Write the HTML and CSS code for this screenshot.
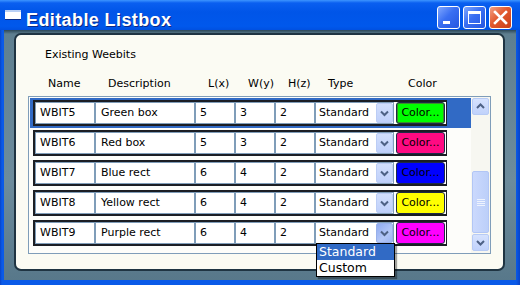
FILE: index.html
```html
<!DOCTYPE html>
<html lang="en">
<head>
  <meta charset="UTF-8" />
  <title>Editable Listbox</title>
  <link rel="stylesheet" href="styles.css">
</head>
<body>
<div class="window">
  <div class="titlebar">
    <svg class="app-icon" width="16" height="10" viewBox="0 0 16 10">
      <rect x="0" y="0" width="16" height="9" fill="#ffffff"/>
      <rect x="0" y="0" width="16" height="2" fill="#b9d0f5"/>
      <rect x="0" y="9" width="16" height="1" fill="#0b2f8c"/>
    </svg>
    <span class="title">Editable Listbox</span>
    <div class="caption-buttons">
      <div class="cap">
        <svg width="21" height="21" viewBox="0 0 21 21"><rect x="5" y="14" width="7" height="3" fill="#fff"/></svg>
      </div>
      <div class="cap">
        <svg width="21" height="21" viewBox="0 0 21 21"><path d="M4 4h13v13H4z M5 7v9h11V7z" fill="#fff" fill-rule="evenodd"/></svg>
      </div>
      <div class="cap close">
        <svg width="21" height="21" viewBox="0 0 21 21"><path d="M5 5L16 16M16 5L5 16" stroke="#fff" stroke-width="2.6" stroke-linecap="square"/></svg>
      </div>
    </div>
  </div>

  <div class="client">
    <div class="panel">
      <div class="caption">Existing Weebits</div>
      <div class="columns">
        <span>Name</span><span>Description</span><span>L(x)</span><span>W(y)</span><span>H(z)</span><span>Type</span><span class="col-color">Color</span>
      </div>

      <div class="listbox">
        <div class="items">
          <div class="item selected">
            <div class="row">
              <div class="cell c-name">WBIT5</div><div class="cell c-desc">Green box</div><div class="cell c-num">5</div><div class="cell c-num">3</div><div class="cell c-num">2</div>
              <div class="combo"><span class="combo-text">Standard</span><span class="combo-btn"><svg width="15" height="18" viewBox="0 0 15 18"><path d="M4 7.5l3.5 3.5 3.5-3.5" fill="none" stroke="#4d6185" stroke-width="2"/></svg></span></div>
              <div class="color-btn focused c-green">Color...</div>
            </div>
          </div>
          <div class="item">
            <div class="row">
              <div class="cell c-name">WBIT6</div><div class="cell c-desc">Red box</div><div class="cell c-num">5</div><div class="cell c-num">3</div><div class="cell c-num">2</div>
              <div class="combo"><span class="combo-text">Standard</span><span class="combo-btn"><svg width="15" height="18" viewBox="0 0 15 18"><path d="M4 7.5l3.5 3.5 3.5-3.5" fill="none" stroke="#4d6185" stroke-width="2"/></svg></span></div>
              <div class="color-btn c-pink">Color...</div>
            </div>
          </div>
          <div class="item">
            <div class="row">
              <div class="cell c-name">WBIT7</div><div class="cell c-desc">Blue rect</div><div class="cell c-num">6</div><div class="cell c-num">4</div><div class="cell c-num">2</div>
              <div class="combo"><span class="combo-text">Standard</span><span class="combo-btn"><svg width="15" height="18" viewBox="0 0 15 18"><path d="M4 7.5l3.5 3.5 3.5-3.5" fill="none" stroke="#4d6185" stroke-width="2"/></svg></span></div>
              <div class="color-btn c-blue">Color...</div>
            </div>
          </div>
          <div class="item">
            <div class="row">
              <div class="cell c-name">WBIT8</div><div class="cell c-desc">Yellow rect</div><div class="cell c-num">6</div><div class="cell c-num">4</div><div class="cell c-num">2</div>
              <div class="combo"><span class="combo-text">Standard</span><span class="combo-btn"><svg width="15" height="18" viewBox="0 0 15 18"><path d="M4 7.5l3.5 3.5 3.5-3.5" fill="none" stroke="#4d6185" stroke-width="2"/></svg></span></div>
              <div class="color-btn c-yellow">Color...</div>
            </div>
          </div>
          <div class="item">
            <div class="row">
              <div class="cell c-name">WBIT9</div><div class="cell c-desc">Purple rect</div><div class="cell c-num">6</div><div class="cell c-num">4</div><div class="cell c-num">2</div>
              <div class="combo"><span class="combo-text">Standard</span><span class="combo-btn pressed"><svg width="15" height="18" viewBox="0 0 15 18"><path d="M4 7.5l3.5 3.5 3.5-3.5" fill="none" stroke="#4d6185" stroke-width="2"/></svg></span></div>
              <div class="color-btn c-magenta">Color...</div>
            </div>
          </div>
        </div>

        <div class="scrollbar">
          <div class="sb-btn"><svg width="15" height="15" viewBox="0 0 15 15"><path d="M4 9l3.5-3.5 3.5 3.5" fill="none" stroke="#4d6185" stroke-width="2"/></svg></div>
          <div class="sb-track">
            <div class="sb-thumb"><svg width="8" height="8" viewBox="0 0 8 8"><path d="M0 1.5h8M0 3.5h8M0 5.5h8M0 7.5h8" stroke="#eef3fe" stroke-width="1"/></svg></div>
          </div>
          <div class="sb-btn"><svg width="15" height="15" viewBox="0 0 15 15"><path d="M4 6l3.5 3.5 3.5-3.5" fill="none" stroke="#4d6185" stroke-width="2"/></svg></div>
        </div>

        <div class="popup">
          <div class="popup-item active">Standard</div>
          <div class="popup-item">Custom</div>
        </div>
      </div>
    </div>
  </div>
</div>
</body>
</html>
```

FILE: styles.css
```css
* { box-sizing: border-box; }
body { margin: 0; background: #ffffff; font-family: "DejaVu Sans", sans-serif; font-size: 11px; color: #000; }

.window { width: 520px; height: 285px; display: flex; flex-direction: column; background: linear-gradient(to right, #0843c8, #0a5ae8 2px, #0a5ae8 516px, #0843c8); }
.titlebar { height: 30px; display: flex; align-items: flex-start; padding: 0 8px 0 5px; background: linear-gradient(180deg, #3d95ff 0, #0a5ff0 3px, #0055e8 40%, #0058ec 88%, #0050e0 100%); }
.app-icon { margin-top: 10px; }
.title { margin: 10px 0 0 5px; font: bold 18px/20px "Liberation Sans", sans-serif; letter-spacing: 0.4px; color: #fff; text-shadow: 1px 1px #0c2a86; }
.caption-buttons { margin-left: auto; display: flex; gap: 3px; padding-top: 6px; }
.cap { width: 23px; height: 23px; border: 1px solid #fff; border-radius: 3px; background: linear-gradient(135deg, #7fa7ff 0%, #3a6ff2 45%, #2556e0 100%); }
.cap.close { background: linear-gradient(135deg, #f3a083 0%, #e2592e 45%, #c9401a 100%); }
.cap svg { display: block; }

.client { flex: 1; margin: 0 4px 5px; display: flex; background: linear-gradient(180deg, #2c4757 0, #5f7f90 4px, #6d8c9c 60%, #58788a 100%); }
.panel { flex: 1; margin: 3px 11px 9px 10px; display: flex; flex-direction: column; padding: 0 12px; background: #fbfbf3; border: 2px solid #1f3442; border-radius: 7px; }

.caption { margin-top: 13px; padding-left: 17px; line-height: 14px; }
.columns { margin-top: 15px; padding-left: 7px; display: grid; grid-template-columns: 60px 100px 40px 40px 40px 79px 51px; line-height: 14px; }
.columns span { padding-left: 13px; white-space: nowrap; }
.columns .col-color { padding-left: 14px; }

.listbox { position: relative; margin-top: 5px; height: 158px; display: flex; border: 1px solid #7f9db9; background: #fdfdfa; }
.items { flex: 1; padding: 1px 0 0 1px; overflow: hidden; }
.item { height: 30px; padding: 2px 0 2px 3px; }
.item.selected { background: #316ac5; }
.row { display: flex; width: 414px; height: 26px; border: 2px solid #1b1e24; border-right-width: 1px; background: #fff; }
.cell { height: 22px; border: 1px solid #7f9db9; background: #fff; padding: 0 4px; line-height: 20px; white-space: nowrap; overflow: hidden; }
.c-name { width: 60px; }
.c-desc { width: 100px; padding-left: 5px; }
.c-num { width: 40px; }

.combo { width: 79px; height: 22px; display: flex; border: 1px solid #7f9db9; background: #fff; }
.combo-text { flex: 1; padding-left: 3px; line-height: 20px; }
.combo-btn { width: 17px; height: 20px; border: 1px solid #bccdf5; border-radius: 2px; background: linear-gradient(180deg, #d2dffd, #bfd0fa); display: flex; align-items: center; justify-content: center; }
.combo-btn.pressed { background: linear-gradient(135deg, #8faaf0, #b3c7f7 60%, #9db5f2); border-color: #98b0ea; }
.combo-btn svg, .sb-btn svg { display: block; }

.color-btn { width: 49px; height: 22px; margin-left: 2px; border: 1px solid #1e2a48; border-radius: 3px; line-height: 20px; text-align: center; white-space: nowrap; }
.color-btn.focused { box-shadow: inset 0 0 0 1px #3c8d2a; }
.c-green { background: #00ff00; }
.c-pink { background: #ff0a82; }
.c-blue { background: #0000ff; }
.c-yellow { background: #ffff00; }
.c-magenta { background: #ff00ff; }

.scrollbar { width: 19px; display: flex; flex-direction: column; padding: 1px 1px 2px 1px; background: #f7f7f1; }
.sb-btn { height: 17px; border: 1px solid #b7cbf5; border-radius: 2px; background: linear-gradient(180deg, #d6e2fe, #c0d2fb); display: flex; align-items: center; justify-content: center; }
.sb-track { flex: 1; display: flex; flex-direction: column; justify-content: flex-end; }
.sb-thumb { height: 62px; margin-bottom: 1px; border: 1px solid #b2c6f5; border-radius: 2px; background: linear-gradient(90deg, #cbd9fd, #bccff9); display: flex; align-items: center; justify-content: center; }

.popup { position: absolute; left: 287px; top: 146px; width: 79px; border: 1px solid #000; background: #fff; font-size: 12.5px; line-height: 16px; box-shadow: 2px 2px 1px rgba(0, 0, 0, 0.35); }
.popup-item { padding-left: 2px; }
.popup-item.active { background: #316ac5; color: #fff; }
```
